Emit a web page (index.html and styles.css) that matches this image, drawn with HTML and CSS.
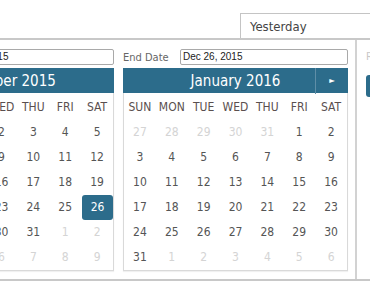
FILE: index.html
```html
<!DOCTYPE html>
<html>
<head>
<meta charset="utf-8">
<link rel="stylesheet" href="styles.css">
</head>
<body>
<div class="top">
  <div class="range-select">Yesterday</div>
</div>
<div class="panel">
  <div class="cals">
    <div class="cal">
      <div class="field"><span class="lbl">Start Date</span><div class="inp">Dec 26, 2015</div></div>
      <div class="head">
        <span class="nav prev">&#9668;</span>
        <span class="title">December 2015</span>
        <span class="nav-empty"></span>
      </div>
      <div class="grid">
        <span class="dn">SUN</span><span class="dn">MON</span><span class="dn">TUE</span><span class="dn">WED</span><span class="dn">THU</span><span class="dn">FRI</span><span class="dn">SAT</span>
        <span class="off">29</span><span class="off">30</span><span>1</span><span>2</span><span>3</span><span>4</span><span>5</span>
        <span>6</span><span>7</span><span>8</span><span>9</span><span>10</span><span>11</span><span>12</span>
        <span>13</span><span>14</span><span>15</span><span>16</span><span>17</span><span>18</span><span>19</span>
        <span>20</span><span>21</span><span>22</span><span>23</span><span>24</span><span>25</span><span class="sel">26</span>
        <span>27</span><span>28</span><span>29</span><span>30</span><span>31</span><span class="off">1</span><span class="off">2</span>
        <span class="off">3</span><span class="off">4</span><span class="off">5</span><span class="off">6</span><span class="off">7</span><span class="off">8</span><span class="off">9</span>
      </div>
    </div>
    <div class="cal">
      <div class="field"><span class="lbl">End Date</span><div class="inp">Dec 26, 2015</div></div>
      <div class="head">
        <span class="nav-empty"></span>
        <span class="title">January 2016</span>
        <span class="nav next">&#9658;</span>
      </div>
      <div class="grid">
        <span class="dn">SUN</span><span class="dn">MON</span><span class="dn">TUE</span><span class="dn">WED</span><span class="dn">THU</span><span class="dn">FRI</span><span class="dn">SAT</span>
        <span class="off">27</span><span class="off">28</span><span class="off">29</span><span class="off">30</span><span class="off">31</span><span>1</span><span>2</span>
        <span>3</span><span>4</span><span>5</span><span>6</span><span>7</span><span>8</span><span>9</span>
        <span>10</span><span>11</span><span>12</span><span>13</span><span>14</span><span>15</span><span>16</span>
        <span>17</span><span>18</span><span>19</span><span>20</span><span>21</span><span>22</span><span>23</span>
        <span>24</span><span>25</span><span>26</span><span>27</span><span>28</span><span>29</span><span>30</span>
        <span>31</span><span class="off">1</span><span class="off">2</span><span class="off">3</span><span class="off">4</span><span class="off">5</span><span class="off">6</span>
      </div>
    </div>
  </div>
  <div class="side">
    <div class="side-lbl">Range</div>
    <div class="btn">Apply</div>
  </div>
</div>
</body>
</html>
```
FILE: styles.css
```css
html, body {
  margin: 0;
  padding: 0;
  background: #fff;
  overflow: hidden;
  width: 370px;
  height: 297px;
}
body {
  font-family: "DejaVu Sans Condensed", "DejaVu Sans", sans-serif;
  color: #555;
}
.top {
  height: 38px;
  display: flex;
  align-items: flex-end;
}
.range-select {
  margin-left: 240px;
  width: 150px;
  height: 24px;
  flex: none;
  border: 1px solid #c4c4c4;
  border-bottom: none;
  box-sizing: content-box;
  font-size: 13px;
  line-height: 25px;
  padding-left: 9px;
  color: #444;
}
.panel {
  display: flex;
  border-top: 2px solid #c8c8c8;
  border-bottom: 2px solid #c8c8c8;
}
.cals {
  flex: none;
  width: 466px;
  margin-left: -111px;
  display: flex;
  gap: 9px;
  padding: 9px 0 8px;
}
.cal {
  width: 225px;
  flex: none;
}
.field {
  display: flex;
  align-items: center;
  height: 16px;
  margin-bottom: 3px;
}
.lbl {
  width: 57px;
  font-size: 11px;
  color: #666;
}
.inp {
  width: 168px;
  height: 16px;
  box-sizing: border-box;
  border: 1px solid #a9a9a9;
  border-radius: 2px;
  font-size: 10px;
  line-height: 14px;
  padding-left: 2px;
  color: #222;
  font-family: "Liberation Sans", sans-serif;
}
.head {
  height: 25px;
  background: #2c6c8b;
  display: grid;
  grid-template-columns: 33px 1fr 33px;
  align-items: stretch;
  color: #fff;
}
.title {
  font-size: 15px;
  line-height: 26px;
  text-align: center;
}
.nav {
  font-size: 8px;
  line-height: 25px;
  text-align: center;
}
.next { border-left: 1px solid #5f8ea7; }
.prev { border-right: 1px solid #5f8ea7; }
.grid {
  display: grid;
  grid-template-columns: repeat(7, 1fr);
  grid-auto-rows: 25px;
  border: 1px solid #d9d9d9;
  border-top: none;
  padding: 2px 0 0;
  box-shadow: 0 1px 1px rgba(0,0,0,0.06);
}
.grid span {
  font-size: 12px;
  line-height: 25px;
  text-align: center;
  color: #555;
}
.grid span.dn {
  color: #5a4f4f;
  font-size: 12px;
}
.grid span.off {
  color: #d4d4d4;
}
.grid span.sel {
  background: #2c6c8b;
  color: #fff;
  border-radius: 3px;
  margin-left: 1px;
}
.side {
  flex: 1;
  border-left: 2px solid #d2d2d2;
  padding: 10px 0 0 9px;
  overflow: hidden;
}
.side-lbl {
  font-size: 11px;
  line-height: 14px;
  color: #c8c8c8;
  white-space: nowrap;
}
.btn {
  margin-top: 11px;
  height: 22px;
  width: 60px;
  background: #2c6c8b;
  border-radius: 3px;
  color: #fff;
  font-size: 11px;
  line-height: 22px;
  padding-left: 10px;
}
```
